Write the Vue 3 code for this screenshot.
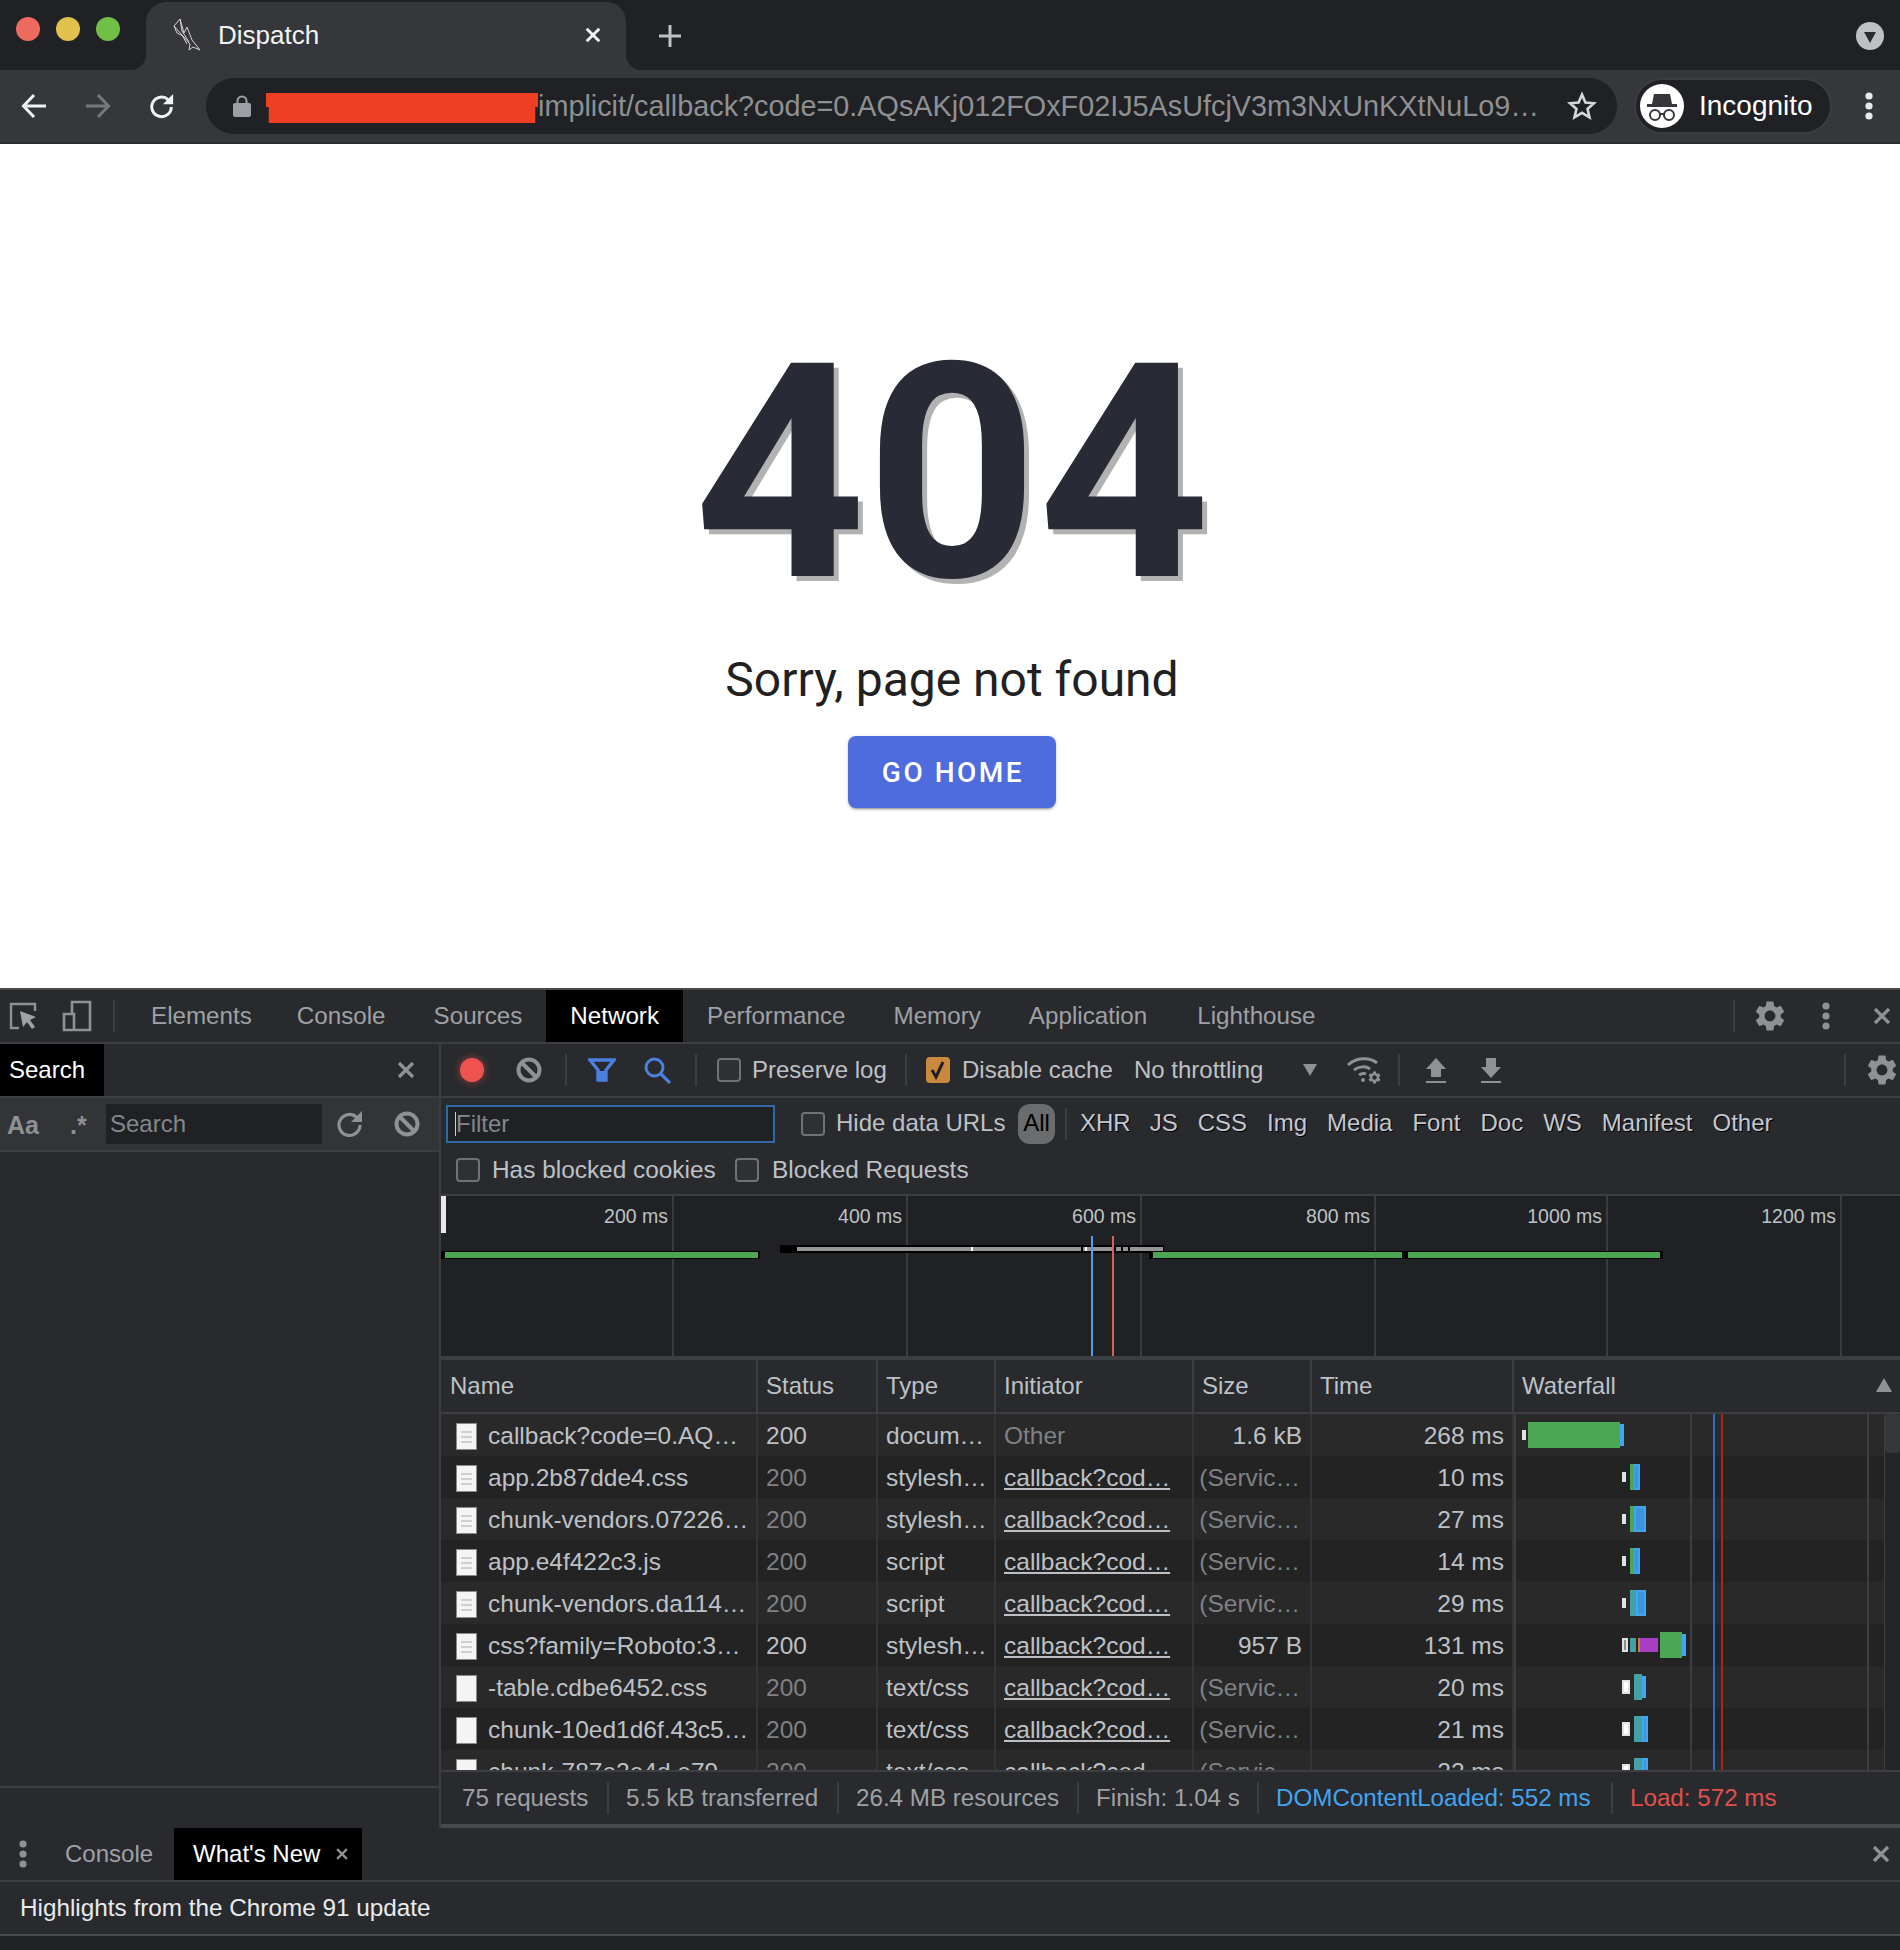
<script setup>
const devTabs = ['Elements', 'Console', 'Sources', 'Network', 'Performance', 'Memory', 'Application', 'Lighthouse']
const types = ['XHR', 'JS', 'CSS', 'Img', 'Media', 'Font', 'Doc', 'WS', 'Manifest', 'Other']
const ticks = [
  { x: 231, label: '200 ms' }, { x: 465, label: '400 ms' }, { x: 699, label: '600 ms' },
  { x: 933, label: '800 ms' }, { x: 1165, label: '1000 ms' }, { x: 1399, label: '1200 ms' }
]
const stats = [
  { t: '75 requests', c: 's1' }, { t: '5.5 kB transferred', c: 's2' }, { t: '26.4 MB resources', c: 's3' },
  { t: 'Finish: 1.04 s', c: 's4' }, { t: 'DOMContentLoaded: 552 ms', c: 's5 blue' }, { t: 'Load: 572 ms', c: 's6 red' }
]
const W = '#e2e2e2', G = '#4ca754', B = '#42a5f0', D = '#3f95dc', T = '#43a0a5', P = '#a83ec4', O = '#c7852f', K = '#8d8d8d', H = '#fff'
const seg = (x, w, top, h, c) => ({ x: x - 1514, w, top, h, c })
const thin = [seg(1622, 4, 16, 10, W)]
const narrow = [...thin, seg(1630, 4, 8, 26, G), seg(1634, 6, 8, 26, B), seg(1635, 3, 10, 22, D)]
const rows = [
  { n: 'callback?code=0.AQ…', st: '200', hi: true, ty: 'docum…', ini: 'Other', sz: '1.6 kB', tm: '268 ms', doc: true,
    bars: [seg(1522, 4, 16, 10, W), seg(1528, 92, 8, 26, G), seg(1620, 4, 10, 22, B)] },
  { n: 'app.2b87dde4.css', st: '200', ty: 'stylesh…', ini: 'callback?cod…', sz: '(Servic…', tm: '10 ms', doc: true, bars: narrow },
  { n: 'chunk-vendors.07226…', st: '200', ty: 'stylesh…', ini: 'callback?cod…', sz: '(Servic…', tm: '27 ms', doc: true,
    bars: [...thin, seg(1630, 4, 8, 26, G), seg(1634, 12, 8, 26, B), seg(1636, 8, 10, 22, D)] },
  { n: 'app.e4f422c3.js', st: '200', ty: 'script', ini: 'callback?cod…', sz: '(Servic…', tm: '14 ms', doc: true, bars: narrow },
  { n: 'chunk-vendors.da114…', st: '200', ty: 'script', ini: 'callback?cod…', sz: '(Servic…', tm: '29 ms', doc: true,
    bars: [...thin, seg(1630, 6, 8, 26, T), seg(1636, 10, 8, 26, B), seg(1638, 6, 10, 22, D)] },
  { n: 'css?family=Roboto:3…', st: '200', hi: true, ty: 'stylesh…', ini: 'callback?cod…', sz: '957 B', tm: '131 ms', doc: true,
    bars: [seg(1622, 6, 14, 14, W), seg(1624, 2, 16, 10, K), seg(1630, 6, 14, 14, T), seg(1638, 2, 14, 14, O), seg(1640, 18, 14, 14, P), seg(1660, 22, 8, 26, G), seg(1682, 4, 10, 22, B)] },
  { n: '-table.cdbe6452.css', st: '200', ty: 'text/css', ini: 'callback?cod…', sz: '(Servic…', tm: '20 ms',
    bars: [seg(1622, 8, 14, 14, W), seg(1624, 4, 16, 10, H), seg(1634, 8, 8, 26, T), seg(1642, 4, 10, 22, B)] },
  { n: 'chunk-10ed1d6f.43c5…', st: '200', ty: 'text/css', ini: 'callback?cod…', sz: '(Servic…', tm: '21 ms',
    bars: [seg(1622, 8, 14, 14, W), seg(1624, 4, 16, 10, H), seg(1634, 8, 8, 26, T), seg(1642, 6, 8, 26, B), seg(1644, 2, 10, 22, D)] },
  { n: 'chunk-787e2e4d.e79…', st: '200', ty: 'text/css', ini: 'callback?cod…', sz: '(Servic…', tm: '22 ms',
    bars: [seg(1622, 8, 14, 14, W), seg(1624, 4, 16, 10, H), seg(1634, 8, 8, 26, T), seg(1642, 6, 8, 26, B), seg(1644, 2, 10, 22, D)] }
]
const strips = [
  { x: 0, w: 319, top: 55, h: 8, c: '#000' }, { x: 4, w: 313, top: 56, h: 6, c: '#4ca754' },
  { x: 339, w: 384, top: 49, h: 8, c: '#000' }, { x: 356, w: 366, top: 51, h: 4, c: '#959595' },
  { x: 708, w: 256, top: 55, h: 8, c: '#000' }, { x: 712, w: 249, top: 56, h: 6, c: '#4ca754' },
  { x: 964, w: 258, top: 55, h: 8, c: '#000' }, { x: 967, w: 252, top: 56, h: 6, c: '#4ca754' },
  { x: 530, w: 2, top: 51, h: 4, c: '#fff' }, { x: 640, w: 2, top: 51, h: 4, c: '#000' }, { x: 644, w: 2, top: 51, h: 4, c: '#fff' },
  { x: 672, w: 3, top: 51, h: 4, c: '#000' }, { x: 680, w: 2, top: 51, h: 4, c: '#000' }, { x: 687, w: 2, top: 51, h: 4, c: '#000' }
]
</script>

<template>
  <svg class="defs" width="0" height="0" aria-hidden="true">
    <symbol id="gear" viewBox="0 0 24 24"><path d="M19.14 12.94c.04-.3.06-.61.06-.94 0-.32-.02-.64-.07-.94l2.03-1.58c.18-.14.23-.41.12-.61l-1.92-3.32c-.12-.22-.37-.29-.59-.22l-2.39.96c-.5-.38-1.03-.7-1.62-.94L14.4 2.81c-.04-.24-.24-.41-.48-.41h-3.84c-.24 0-.43.17-.47.41L9.25 5.35c-.59.24-1.13.57-1.62.94l-2.39-.96c-.22-.08-.47 0-.59.22L2.74 8.87c-.12.21-.08.47.12.61l2.03 1.58c-.05.3-.09.63-.09.94s.02.64.07.94l-2.03 1.58c-.18.14-.23.41-.12.61l1.92 3.32c.12.22.37.29.59.22l2.39-.96c.5.38 1.03.7 1.62.94l.36 2.54c.05.24.24.41.48.41h3.84c.24 0 .44-.17.47-.41l.36-2.54c.59-.24 1.13-.56 1.62-.94l2.39.96c.22.08.47 0 .59-.22l1.92-3.32c.12-.22.07-.47-.12-.61l-2.01-1.58zM12 15.6c-1.98 0-3.6-1.62-3.6-3.6s1.62-3.6 3.6-3.6 3.6 1.62 3.6 3.6-1.62 3.6-3.6 3.6z" /></symbol>
    <symbol id="cross" viewBox="0 0 20 20"><path d="M3 3 17 17M17 3 3 17" fill="none" stroke="currentColor" stroke-width="3.2" /></symbol>
    <symbol id="block" viewBox="0 0 28 28"><circle cx="14" cy="14" r="10.5" fill="none" stroke="currentColor" stroke-width="4" /><path d="M7 7 21 21" stroke="currentColor" stroke-width="4" /></symbol>
    <symbol id="dots" viewBox="0 0 10 32"><circle cx="5" cy="6" r="3.6" /><circle cx="5" cy="16" r="3.6" /><circle cx="5" cy="26" r="3.6" /></symbol>
    <symbol id="reload" viewBox="0 0 28 28"><path d="M24 15a10.500 10.500 0 1 1-3.200-7.600" fill="none" stroke="currentColor" stroke-width="3.200" /><path d="M26 1v11H15z" fill="currentColor" /></symbol>
  </svg>

  <div class="root">
    <header class="browser">
      <div class="tabstrip">
        <div class="lights"><i class="l red-l"></i><i class="l yel-l"></i><i class="l grn-l"></i></div>
        <div class="tab">
          <svg class="favicon" viewBox="0 0 30 34" fill="none" stroke="#d4d4d4" stroke-width="1">
            <path d="M2 8 8 1l4 14 3-6 5 13 8 10-7-3-4 3 1-6L11 18 5 15zM8 1l2 12 7 11M2 8l8 9 5 9" />
          </svg>
          <span class="tab-title">Dispatch</span>
          <svg class="tab-x"><use href="#cross" /></svg>
        </div>
        <svg class="plus" viewBox="0 0 24 24"><path d="M12 1v22M1 12h22" stroke="#bdc1c6" stroke-width="3" /></svg>
        <svg class="caret" viewBox="0 0 28 28"><circle cx="14" cy="14" r="14" fill="#bdc1c6" /><path d="M8 10h12l-6 11z" fill="#2b2c2f" /></svg>
      </div>
      <div class="toolbar">
        <svg class="nav back" viewBox="0 0 26 26"><path d="M25 13H3M13 2 2.500 13 13 24" fill="none" stroke="#f1f3f4" stroke-width="3" /></svg>
        <svg class="nav fwd" viewBox="0 0 26 26"><path d="M1 13h22M13 2l10.500 11L13 24" fill="none" stroke="#76787b" stroke-width="3" /></svg>
        <svg class="nav rel"><use href="#reload" /></svg>
        <div class="omnibox">
          <svg class="lock" viewBox="0 0 18 22"><path d="M4.500 9V6a4.500 4.500 0 0 1 9 0v3" fill="none" stroke="#9aa0a6" stroke-width="2" /><rect x="0" y="8" width="18" height="14" rx="2" fill="#9aa0a6" /></svg>
          <span class="redact"></span>
          <span class="url">implicit/callback?code=0.AQsAKj012FOxF02IJ5AsUfcjV3m3NxUnKXtNuLo9…</span>
          <svg class="star" viewBox="0 0 30 30"><path d="M15 3.500l3.400 8 8.600.7-6.500 5.700 2 8.400-7.500-4.500-7.500 4.500 2-8.400L3 12.200l8.600-.7z" fill="none" stroke="#d5d7da" stroke-width="2.600" /></svg>
        </div>
        <div class="incog">
          <svg class="incog-ic" viewBox="0 0 44 44">
            <circle cx="22" cy="22" r="22" fill="#fff" />
            <path d="M14 10h16l2 10H12z" fill="#35363a" />
            <rect x="7" y="20" width="30" height="3" fill="#35363a" />
            <circle cx="15" cy="31" r="5" fill="none" stroke="#35363a" stroke-width="2" />
            <circle cx="29" cy="31" r="5" fill="none" stroke="#35363a" stroke-width="2" />
            <path d="M20 30h4" stroke="#35363a" stroke-width="2" />
          </svg>
          <span>Incognito</span>
        </div>
        <svg class="more"><use href="#dots" /></svg>
      </div>
    </header>

    <main class="page">
      <h1 class="big">404</h1>
      <p class="sorry">Sorry, page not found</p>
      <button class="home">GO HOME</button>
    </main>

    <section class="devtools">
      <div class="dt-tabs">
        <svg class="ic inspect" viewBox="0 0 28 28" fill="none"><path d="M10 26H2V2h24v7" stroke="#8f9194" stroke-width="2.400" /><path d="M11 9l16 6-6 3 5 7-3 2-5-7-4 5z" fill="#a0a2a5" /></svg>
        <svg class="ic device" viewBox="0 0 30 32" fill="none"><path d="M10 14V2h18v28H12M2 14h10v16H2z" stroke="#8f9194" stroke-width="2.600" /></svg>
        <i class="sep tab-sep"></i>
        <span v-for="t in devTabs" :key="t" class="dt-tab" :class="{ on: t === 'Network' }">{{ t }}</span>
        <i class="sep right-sep"></i>
        <svg class="gear top-gear"><use href="#gear" /></svg>
        <svg class="vdots"><use href="#dots" /></svg>
        <svg class="x top-x"><use href="#cross" /></svg>
      </div>

      <div class="dt-main">
        <aside class="side">
          <div class="side-tabs">
            <span class="side-tab">Search</span>
            <svg class="x side-x"><use href="#cross" /></svg>
          </div>
          <div class="side-search">
            <b class="aa">Aa</b>
            <b class="re">.*</b>
            <span class="side-input">Search</span>
            <svg class="s-ic s-rel"><use href="#reload" /></svg>
            <svg class="s-ic s-blk"><use href="#block" /></svg>
          </div>
          <div class="side-body"></div>
          <div class="side-foot"></div>
        </aside>

        <div class="net">
          <div class="net-bar">
            <span class="rec"></span>
            <svg class="clear"><use href="#block" /></svg>
            <i class="sep sep-a"></i>
            <svg class="funnel" viewBox="0 0 28 24"><path d="M2 2h24l-8 10v10h-8V12z" fill="none" stroke="#4a80e0" stroke-width="3.400" /><path d="M10 13h8v8h-8z" fill="#4a80e0" /></svg>
            <svg class="mag" viewBox="0 0 27 27" fill="none"><circle cx="10.500" cy="10.500" r="8.500" stroke="#4a80e0" stroke-width="3" /><path d="M16.500 16.500 26 26" stroke="#4a80e0" stroke-width="3.200" /></svg>
            <i class="sep sep-b"></i>
            <i class="cb cb-preserve"></i>
            <span class="lbl lbl-preserve">Preserve log</span>
            <i class="sep sep-c"></i>
            <i class="cb-on"><svg viewBox="0 0 24 26"><path d="M6 13l4 7 7-15" fill="none" stroke="#202124" stroke-width="3" /></svg></i>
            <span class="lbl lbl-cache">Disable cache</span>
            <span class="lbl lbl-throttle">No throttling</span>
            <i class="tri"></i>
            <svg class="wifi" viewBox="0 0 36 30" fill="none" stroke="#8f9194" stroke-width="3">
              <path d="M2 10C10 2 24 2 31 8M8 15c5-4 12-4 16-1M13 20c3-2 5-2 7-1" />
              <circle cx="17" cy="25" r="2" fill="#8f9194" stroke="none" />
              <use href="#gear" x="21" y="15" width="15" height="15" fill="#8f9194" stroke="none" />
            </svg>
            <i class="sep sep-d"></i>
            <svg class="updown up" viewBox="0 0 22 26"><path d="M11 1l10 11h-5v8H6v-8H1zM1 24h20v2H1z" fill="#8f9194" /></svg>
            <svg class="updown down" viewBox="0 0 22 26"><path d="M6 1h10v9h5L11 21 1 10h5zM1 24h20v2H1z" fill="#8f9194" /></svg>
            <i class="sep sep-e"></i>
            <svg class="gear net-gear"><use href="#gear" /></svg>
          </div>

          <div class="filters">
            <div class="f-row">
              <span class="f-input"><i class="caret-line"></i>Filter</span>
              <i class="cb cb-hide"></i>
              <span class="lbl lbl-hide">Hide data URLs</span>
              <span class="all">All</span>
              <i class="sep sep-f"></i>
              <span v-for="t in types" :key="t" class="ty">{{ t }}</span>
            </div>
            <div class="f-row2">
              <i class="cb cb-cookies"></i>
              <span class="lbl lbl-cookies">Has blocked cookies</span>
              <i class="cb cb-blocked"></i>
              <span class="lbl lbl-blocked">Blocked Requests</span>
            </div>
          </div>

          <div class="timeline">
            <i class="marker"></i>
            <template v-for="t in ticks" :key="t.x">
              <i class="grid" :style="{ left: t.x + 'px' }"></i>
              <span class="tick" :style="{ right: 1459 - t.x + 4 + 'px' }">{{ t.label }}</span>
            </template>
            <i v-for="(s, i) in strips" :key="i" class="strip"
               :style="{ left: s.x + 'px', width: s.w + 'px', top: s.top + 'px', height: s.h + 'px', background: s.c }"></i>
            <i class="dcl"></i>
            <i class="load"></i>
          </div>

          <div class="table">
            <div class="thead">
              <span class="c-name">Name</span><span class="c-status">Status</span><span class="c-type">Type</span>
              <span class="c-ini">Initiator</span><span class="c-size">Size</span><span class="c-time">Time</span>
              <span class="c-wf">Waterfall<i class="sort"></i></span>
            </div>
            <div class="tbody">
              <div v-for="(r, i) in rows" :key="r.n" class="row" :class="{ alt: i % 2 === 1 }">
                <span class="cell c-name nm">
                  <i class="file" :class="{ doc: r.doc }"></i>{{ r.n }}
                </span>
                <span class="cell c-status" :class="{ dim: !r.hi }">{{ r.st }}</span>
                <span class="cell c-type">{{ r.ty }}</span>
                <span class="cell c-ini" :class="r.ini === 'Other' ? 'dim' : 'link'">{{ r.ini }}</span>
                <span class="cell c-size" :class="{ dim: r.sz.startsWith('(') }">{{ r.sz }}</span>
                <span class="cell c-time">{{ r.tm }}</span>
                <span class="cell c-wf wf">
                  <i v-for="(b, j) in r.bars" :key="j" class="bar"
                     :style="{ left: b.x + 'px', width: b.w + 'px', top: b.top + 'px', height: b.h + 'px', background: b.c }"></i>
                </span>
              </div>
              <i class="wf-line wl1"></i><i class="wf-line wl2"></i><i class="wf-line wl3"></i>
              <i class="wf-mark wm-b"></i><i class="wf-mark wm-r"></i>
              <div class="scroll"><i class="thumb"></i></div>
            </div>
          </div>

          <div class="status">
            <span v-for="s in stats" :key="s.t" class="stat" :class="s.c">{{ s.t }}</span>
          </div>
        </div>
      </div>

      <div class="drawer-tabs">
        <svg class="vdots drawer-dots"><use href="#dots" /></svg>
        <span class="d-tab">Console</span>
        <span class="d-tab on">What's New<svg class="d-x"><use href="#cross" /></svg></span>
        <svg class="x drawer-x"><use href="#cross" /></svg>
      </div>
      <div class="news">Highlights from the Chrome 91 update</div>
      <div class="dt-end"></div>
    </section>
  </div>
</template>

<style>
html, body { margin: 0; background: #fff; }
</style>

<style scoped>
.defs { position: absolute; }
.root { width: 1900px; height: 1950px; overflow: hidden; font-family: "Liberation Sans", Arial, sans-serif; }
i, b { font-style: normal; display: block; flex: none; }
svg { display: block; flex: none; }

/* browser chrome */
.browser { background: #202124; }
.tabstrip { height: 70px; display: flex; align-items: flex-end; }
.lights { width: 146px; height: 70px; display: flex; align-items: center; gap: 16px; padding-left: 16px; box-sizing: border-box; }
.l { width: 24px; height: 24px; border-radius: 50%; margin-top: -12px; }
.red-l { background: #ee6a5f; } .yel-l { background: #e1c04c; } .grn-l { background: #72bf47; }
.tab { width: 480px; height: 68px; background: #36373b; border-radius: 20px 20px 0 0; position: relative; display: flex; align-items: center; padding-bottom: 2px; box-sizing: border-box; }
.tab::before, .tab::after { content: ""; position: absolute; bottom: 0; width: 16px; height: 16px; }
.tab::before { left: -16px; background: radial-gradient(circle at 0 0, transparent 16px, #36373b 16.5px); }
.tab::after { right: -16px; background: radial-gradient(circle at 100% 0, transparent 16px, #36373b 16.5px); }
.favicon { width: 30px; height: 34px; margin-left: 26px; }
.tab-title { margin-left: 16px; font-size: 26px; color: #f1f3f4; line-height: 1; }
.tab-x { width: 18px; height: 18px; margin-left: auto; margin-right: 24px; color: #f1f3f4; }
.plus { width: 24px; height: 24px; margin: 0 0 22px 32px; }
.caret { width: 28px; height: 28px; margin: 0 16px 20px auto; }
.toolbar { height: 72px; background: #36373b; border-bottom: 2px solid #2b2c2f; display: flex; align-items: center; }
.nav { width: 26px; height: 26px; margin-top: -1px; }
.back { margin-left: 21px; }
.fwd { margin-left: 38px; }
.rel { margin-left: 38px; color: #f1f3f4; }
.omnibox { width: 1411px; height: 56px; margin-left: 31px; background: #202124; border-radius: 28px; display: flex; align-items: center; box-sizing: border-box; padding-left: 27px; }
.lock { width: 18px; height: 22px; }
.redact { width: 272px; height: 30px; margin: 4px 0 0 15px; background: #ee3f24; flex: none; clip-path: polygon(0 0, 100% 0, 100% 47%, 99% 47%, 99% 100%, 1% 100%, 1% 47%, 0 47%); }
.url { font-size: 28.8px; color: #8e9093; white-space: nowrap; flex: none; }
.star { width: 30px; height: 30px; margin-left: 28px; }
.incog { width: 198px; height: 56px; margin-left: 17px; box-sizing: border-box; border: 2px solid #3c3d41; background: #202124; border-radius: 28px; display: flex; align-items: center; padding-left: 4px; color: #fff; font-size: 28px; }
.incog-ic { width: 44px; height: 44px; margin-right: 15px; }
.more { width: 10px; height: 32px; margin-left: 32px; fill: #e8eaed; }

/* page */
.page { height: 844px; display: flex; flex-direction: column; align-items: center; background: #fff; box-sizing: border-box; padding: 180px 0 0 4px; font-family: Roboto, sans-serif; }
.big { margin: 0; font-size: 300px; line-height: 1; font-weight: 700; color: #282a36; text-shadow: 5px 5px 0 rgba(0, 0, 0, .3); }
.sorry { margin: 28px 0 0; font-size: 48px; line-height: 56px; color: #212121; }
.home { margin-top: 28px; width: 208px; height: 72px; border: 0; padding: 0 0 0 2px; border-radius: 8px; background: #4e6cdb; color: #fff; font: 500 28px Roboto, sans-serif; letter-spacing: 2.5px; box-shadow: 0 3px 1px -2px rgba(0,0,0,.2), 0 2px 2px 0 rgba(0,0,0,.14), 0 1px 5px 0 rgba(0,0,0,.12); }

/* devtools */
.devtools { height: 962px; background: #292a2d; border-top: 2px solid #494a4c; box-sizing: border-box; color: #bdc1c6; font-size: 24px; display: flex; flex-direction: column; }
.sep { width: 2px; background: #3d3e41; }
.dt-tabs { height: 54px; flex: none; border-bottom: 2px solid #3d3e41; box-sizing: border-box; display: flex; align-items: stretch; position: relative; }
.dt-tabs > svg, .dt-tabs > .sep { align-self: center; }
.inspect { width: 28px; height: 28px; margin-left: 9px; }
.device { width: 30px; height: 32px; margin-left: 25px; }
.tab-sep { height: 32px; margin: 0 12px 0 21px; }
.dt-tab { padding: 0 24px; display: flex; align-items: center; color: #9ea1a6; font-size: 24.2px; }
.tab-sep + .dt-tab { padding-right: 21px; }
.dt-tab:nth-child(11) { margin-left: 2px; }
.dt-tab.on { background: #000; color: #fff; }
.right-sep { margin-left: auto; height: 32px; }
.top-gear { width: 36px; height: 36px; margin-left: 17px; fill: #8f9194; }
.vdots { width: 10px; height: 32px; fill: #8f9194; }
.dt-tabs .vdots { margin-left: 33px; }
.x { width: 20px; height: 20px; color: #8f9194; }
.top-x { margin: 0 8px 0 41px; }
.dt-main { height: 784px; flex: none; display: flex; }

/* sidebar */
.side { width: 439px; flex: none; display: flex; flex-direction: column; border-right: 2px solid #3d3e41; box-sizing: content-box; }
.side-tabs { height: 54px; flex: none; display: flex; align-items: stretch; border-bottom: 2px solid #3d3e41; box-sizing: border-box; }
.side-tab { width: 104px; background: #000; color: #fff; display: flex; align-items: center; padding-left: 9px; box-sizing: border-box; }
.side-x { align-self: center; margin-left: 292px; }
.side-search { height: 54px; flex: none; background: #333437; border-bottom: 2px solid #3d3e41; box-sizing: border-box; display: flex; align-items: center; }
.aa { font-size: 25px; color: #8f9194; margin: 3px 0 0 7px; width: 36px; }
.re { font-size: 25px; color: #8f9194; margin: 3px 0 0 27px; width: 36px; }
.side-input { width: 216px; height: 40px; background: #202124; color: #84878b; display: flex; align-items: center; box-sizing: border-box; padding-left: 4px; }
.s-ic { width: 28px; height: 28px; color: #8f9194; }
.s-rel { margin-left: 14px; }
.s-blk { margin-left: 29px; }
.side-body { flex: 1; }
.side-foot { height: 40px; flex: none; border-top: 2px solid #3d3e41; }

/* network */
.net { flex: 1; min-width: 0; display: flex; flex-direction: column; }
.net-bar { height: 54px; flex: none; border-bottom: 2px solid #3d3e41; box-sizing: border-box; display: flex; align-items: center; }
.rec { width: 24px; height: 24px; border-radius: 50%; background: #ef5350; box-shadow: 0 0 6px 2px rgba(239, 83, 80, .35); margin-left: 19px; flex: none; }
.clear { width: 28px; height: 28px; margin-left: 31px; color: #8f9194; }
.net-bar .sep { height: 32px; }
.sep-a { margin-left: 22px; }
.funnel { width: 28px; height: 24px; margin-left: 21px; }
.mag { width: 27px; height: 27px; margin-left: 28px; }
.sep-b { margin-left: 24px; }
.cb { width: 20px; height: 20px; border: 2px solid #707276; border-radius: 4px; background: #2f3033; flex: none; box-sizing: content-box; }
.cb-preserve { margin-left: 20px; }
.lbl { color: #bdc1c6; white-space: nowrap; flex: none; }
.lbl-preserve { width: 133px; margin-left: 11px; }
.sep-c { margin-left: 20px; }
.cb-on { width: 24px; height: 26px; border-radius: 4px; background: #c98a3e; margin-left: 19px; }
.lbl-cache { width: 150px; margin-left: 12px; }
.lbl-throttle { width: 133px; margin-left: 22px; }
.tri { width: 0; height: 0; border-left: 7px solid transparent; border-right: 7px solid transparent; border-top: 12px solid #8f9194; margin-left: 36px; }
.wifi { width: 36px; height: 30px; margin-left: 29px; }
.sep-d { margin-left: 16px; }
.updown { width: 22px; height: 26px; }
.up { margin-left: 25px; }
.down { margin-left: 33px; }
.sep-e { margin-left: 342px; }
.net-gear { width: 36px; height: 36px; margin-left: 18px; fill: #8f9194; }

.filters { height: 96px; flex: none; border-bottom: 2px solid #3d3e41; box-sizing: content-box; }
.f-row { height: 52px; display: flex; align-items: center; }
.f-input { width: 329px; height: 38px; margin-left: 5px; border: 2px solid #2f6aa8; background: #202124; color: #84878b; display: flex; align-items: center; box-sizing: border-box; padding-left: 7px; flex: none; }
.caret-line { width: 1px; height: 24px; background: #d0d0d0; margin-right: 0; }
.cb-hide { margin-left: 26px; }
.lbl-hide { width: 169px; margin: -3px 0 0 11px; }
.all { width: 37px; height: 40px; margin-left: 13px; border-radius: 12px; background: #6b6c6e; color: #000; display: flex; align-items: center; justify-content: center; flex: none; padding-bottom: 2px; box-sizing: border-box; }
.sep-f { height: 32px; margin: 0 13px 0 10px; }
.ty { margin: -3px 20px 0 0; color: #c4c8ce; text-shadow: 1px 1px 0 #000; flex: none; }
.sep-f + .ty { margin-right: 19px; }
.f-row2 { height: 40px; display: flex; align-items: center; font-size: 24.4px; }
.cb-cookies { margin-left: 15px; }
.lbl-cookies { width: 224px; margin-left: 12px; }
.cb-blocked { margin-left: 19px; }
.lbl-blocked { margin-left: 13px; }

.timeline { height: 160px; flex: none; background: #202125; position: relative; color: #bdc1c6; }
.marker { position: absolute; left: 0; top: 0; width: 5px; height: 37px; background: #e8e8e8; }
.grid { position: absolute; top: 0; bottom: 0; width: 2px; background: #3a3b3e; }
.tick { position: absolute; top: 9px; font-size: 19.500px; line-height: 22px; }
.strip { position: absolute; }
.dcl { position: absolute; left: 650px; top: 40px; bottom: 0; width: 2px; background: #4f9fe6; }
.load { position: absolute; left: 671px; top: 40px; bottom: 0; width: 2px; background: #d4605a; }

.table { height: 414px; flex: none; display: flex; flex-direction: column; border-top: 4px solid #3d3e41; box-sizing: border-box; }
.thead { height: 54px; flex: none; display: flex; border-bottom: 2px solid #3d3e41; box-sizing: border-box; line-height: 52px; }
.thead > span { box-sizing: border-box; padding-left: 8px; border-right: 2px solid #3d3e41; }
.thead > .c-name { padding-left: 9px; }
.c-name { width: 317px; flex: none; }
.c-status { width: 120px; flex: none; }
.c-type { width: 118px; flex: none; }
.c-ini { width: 198px; flex: none; }
.c-size { width: 118px; flex: none; }
.c-time { width: 202px; flex: none; }
.c-wf { width: 386px; flex: none; }
.thead .c-wf { border-right: 0; position: relative; }
.sort { position: absolute; right: 8px; top: 18px; width: 0; height: 0; border-left: 8px solid transparent; border-right: 8px solid transparent; border-bottom: 14px solid #8f9194; }
.tbody { flex: 1; min-height: 0; overflow: hidden; position: relative; font-size: 24.5px; }
.row { height: 42px; display: flex; background: #292929; line-height: 44px; }
.row.alt { background: #232323; }
.cell { box-sizing: border-box; padding-left: 8px; border-right: 2px solid #333436; white-space: nowrap; overflow: hidden; color: #bdc1c6; }
.nm { display: flex; align-items: center; padding: 2px 0 0 15px; }
.file { width: 21px; height: 27px; background: #f4f4f4; border: 1px solid #8a8a8a; box-sizing: border-box; margin-right: 11px; flex: none; }
.file.doc { padding: 4px 4px; background: repeating-linear-gradient(#f4f4f4 0 3px, #cfcfcf 3px 5px) content-box, #f4f4f4; }
.dim { color: #7f8184; }
.link { text-decoration: underline; }
.c-size.cell, .c-time.cell { text-align: right; padding-right: 8px; padding-left: 0; }
.cell.c-size.dim { padding-right: 10px; }
.wf { position: relative; border-right: 0; padding: 0; }
.bar { position: absolute; }
.wf-line { position: absolute; top: 0; bottom: 0; width: 2px; background: #3d3e41; }
.wl1 { left: 1073px; }
.wl2 { left: 1249px; }
.wl3 { left: 1426px; }
.wf-mark { position: absolute; top: 0; bottom: 0; width: 2px; }
.wm-b { left: 1272px; background: #2e6bc6; }
.wm-r { left: 1280px; background: #a8261e; }
.scroll { position: absolute; right: 0; top: 0; bottom: 0; width: 16px; background: #242526; border-left: 1px solid #3d3e41; box-sizing: border-box; }
.thumb { height: 39px; background: #36373a; border-radius: 3px; }

.status { height: 58px; flex: none; border-top: 2px solid #3d3e41; border-bottom: 4px solid #48494c; box-sizing: border-box; display: flex; align-items: center; color: #9ea1a6; font-size: 24.2px; }
.stat { padding: 0 18px 0 17px; line-height: 32px; border-right: 2px solid #3d3e41; white-space: nowrap; flex: none; }
.s1 { margin-left: 4px; width: 164px; box-sizing: border-box; }
.s2 { width: 230px; box-sizing: border-box; }
.s3 { width: 240px; box-sizing: border-box; }
.s4 { width: 180px; box-sizing: border-box; }
.s5 { width: 354px; box-sizing: border-box; }
.s6 { border-right: 0; }
.blue { color: #42a5f0; }
.red { color: #e0504d; }

.drawer-tabs { height: 54px; flex: none; border-bottom: 2px solid #3d3e41; box-sizing: border-box; display: flex; align-items: stretch; }
.drawer-tabs > svg { align-self: center; }
.dt-tabs .vdots, .drawer-dots { flex: none; }
.drawer-dots { margin-left: 18px; }
.d-tab { padding: 0 20px 0 19px; display: flex; align-items: center; color: #9ea1a6; white-space: nowrap; }
.drawer-dots + .d-tab { margin-left: 18px; }
.d-tab.on { background: #000; color: #fff; width: 188px; box-sizing: border-box; margin-left: 1px; padding-right: 0; }
.d-x { width: 14px; height: 14px; margin-left: 15px; color: #8f9194; }
.drawer-x { margin-left: auto; margin-right: 9px; }
.news { height: 54px; flex: none; border-bottom: 2px solid #4a4b4e; box-sizing: border-box; padding-left: 20px; line-height: 52px; color: #e8eaed; font-size: 24.3px; }
.dt-end { flex: 1; background: #202124; }
</style>
